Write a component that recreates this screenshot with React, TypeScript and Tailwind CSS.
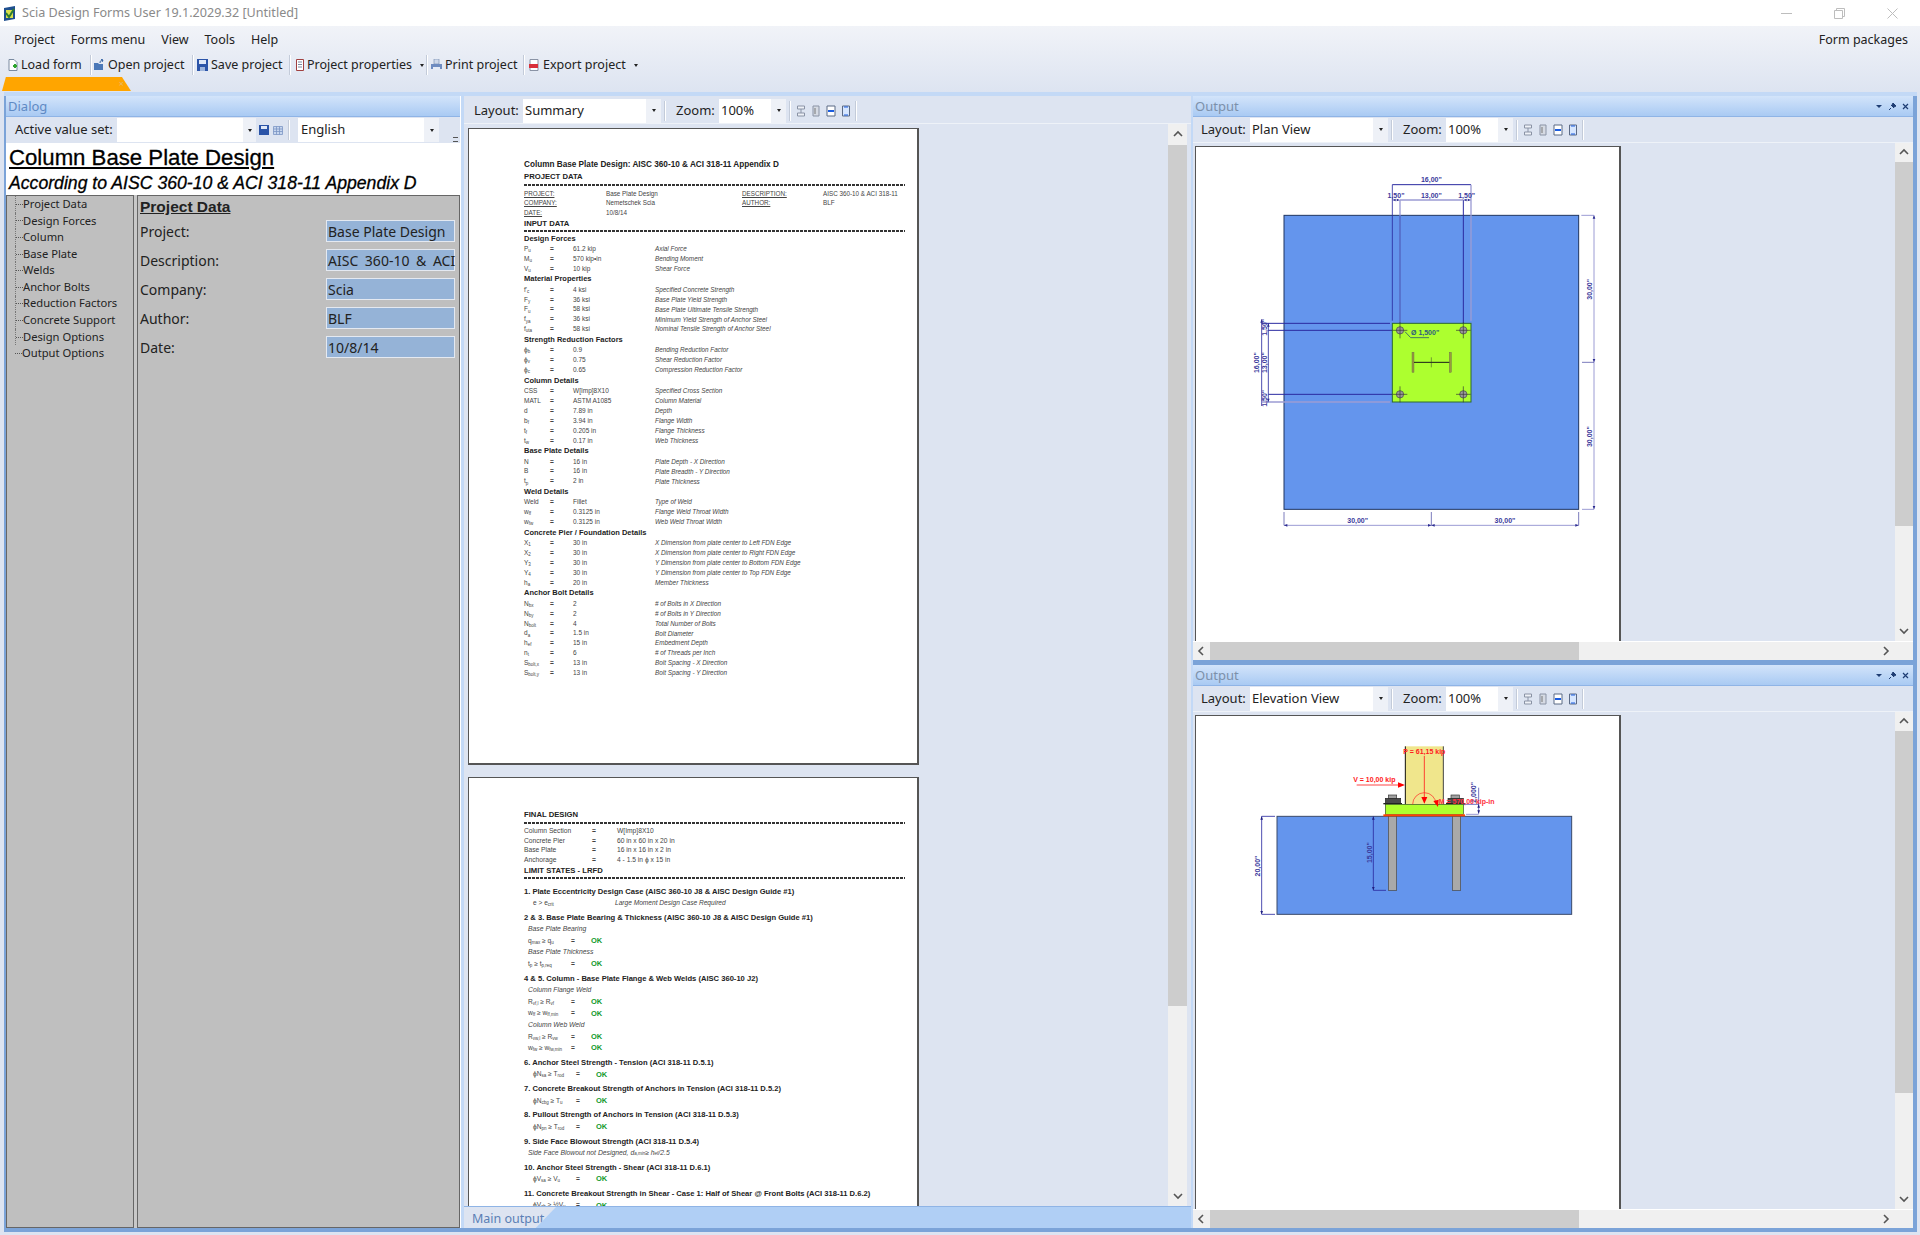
import React from "react";

const ui = "font-['Noto_Sans',sans-serif]";
const doc = "font-['Liberation_Sans',sans-serif]";

function Glyph({ kind }: { kind: string }) {
  if (kind === "load")
    return (
      <svg width="10" height="12" viewBox="0 0 10 12">
        <path d="M1 .5h5l3 3v8H1z" fill="#fff" stroke="#7a8aa0" />
        <path d="M5 7h4M7 5v4" stroke="#2fa52f" strokeWidth="2" />
      </svg>
    );
  if (kind === "open")
    return (
      <svg width="11" height="12" viewBox="0 0 11 12">
        <path d="M0 4h4l1 1h4v6H0z" fill="#4a78b8" />
        <path d="M6 4c0-2 1-3 3-3M7 .5l2 .5-1 2" fill="none" stroke="#2d5d9f" />
      </svg>
    );
  if (kind === "save")
    return (
      <svg width="11" height="12" viewBox="0 0 11 12">
        <path d="M0 0h11v12H0z" fill="#2b54a8" />
        <path d="M2 1h7v4H2z" fill="#dfe8f8" />
        <path d="M3 8h5v4H3z" fill="#9db4dc" />
      </svg>
    );
  if (kind === "props")
    return (
      <svg width="8" height="12" viewBox="0 0 8 12">
        <path d="M.5.5h7v11h-7z" fill="#fff" stroke="#a04040" />
        <path d="M2 3h4M2 5.5h4M2 8h4" stroke="#7a8aa0" />
      </svg>
    );
  if (kind === "print")
    return (
      <svg width="11" height="12" viewBox="0 0 11 12">
        <path d="M3 0h5v5H3z" fill="#cfd9ea" stroke="#6f86ad" strokeWidth=".6" />
        <path d="M0 5h11v5H0z" fill="#6f8cc0" />
        <path d="M2 8h7v3H2z" fill="#e6ecf6" />
      </svg>
    );
  return (
    <svg width="11" height="12" viewBox="0 0 11 12">
      <path d="M1 .5h8v11H1z" fill="#fff" stroke="#8a93a5" />
      <path d="M0 5h9v4H0z" fill="#d9303a" />
    </svg>
  );
}

function Caret() {
  return <span className="w-0 h-0 border-x-[2px] border-t-[3px] border-x-transparent border-t-[#222]" />;
}

function ToolItem({ icon, label, w, caret }: { icon: string; label: string; w: string; caret?: boolean }) {
  return (
    <div className={`flex items-center h-full shrink-0 ${w}`}>
      <Glyph kind={icon} />
      <span className="ml-[3px] text-[12.5px] text-[#222] whitespace-nowrap">{label}</span>
      {caret && (
        <span className="ml-[8px] flex">
          <Caret />
        </span>
      )}
    </div>
  );
}

function Sep() {
  return <span className="block w-px h-[20px] bg-[#c3cbd9] border-r border-white box-content shrink-0" />;
}

function ViewIcons() {
  return (
    <div className="flex items-center gap-[5px] ml-[5px]">
      <svg width="10" height="12" viewBox="0 0 10 12">
        <path d="M1.5 1h7v3h-7zM1.5 8h7v3h-7zM5 4v4" fill="#eef1f7" stroke="#8a93a5" />
      </svg>
      <svg width="10" height="12" viewBox="0 0 10 12">
        <path d="M2 1h6v10H2z" fill="#d5dae3" stroke="#8a93a5" />
        <path d="M4 3v6" stroke="#777" />
      </svg>
      <svg width="10" height="12" viewBox="0 0 10 12">
        <path d="M1 1h8v10H1z" fill="#fff" stroke="#5b6a85" />
        <path d="M2 6h6" stroke="#1a5ce0" strokeWidth="2" />
      </svg>
      <svg width="10" height="12" viewBox="0 0 10 12">
        <path d="M1.5 1h7v10h-7z" fill="#d6e6ff" stroke="#5b6a85" />
        <path d="M3 2h4M3 10h4" stroke="#1a5ce0" />
      </svg>
    </div>
  );
}

function Combo({ value, w }: { value: string; w: string }) {
  return (
    <div className="flex h-[24px] shrink-0">
      <div className={`bg-white flex items-center pl-[2px] text-[13px] text-[#222] ${w}`}>{value}</div>
      <div className="bg-[#eef1f7] flex items-center justify-center w-[15px]">
        <Caret />
      </div>
    </div>
  );
}

function OutputBar({ layout, box }: { layout: string; box: string }) {
  return (
    <div className={`bg-[#dde4f1] border-b border-[#eef2f8] flex items-center shrink-0 text-[13px] text-[#222] ${box}`}>
      <span className="w-[43px] whitespace-nowrap">Layout:</span>
      <span className="ml-[6px]">
        <Combo value={layout} w="w-[123px]" />
      </span>
      <span className="ml-[3px]">
        <Sep />
      </span>
      <span className="ml-[10px] w-[38px] whitespace-nowrap">Zoom:</span>
      <span className="ml-[5px]">
        <Combo value="100%" w="w-[52px]" />
      </span>
      <span className="ml-[3px]">
        <Sep />
      </span>
      <ViewIcons />
      <span className="ml-[4px]">
        <Sep />
      </span>
    </div>
  );
}

function Chevron({ dir }: { dir: "up" | "down" | "left" | "right" }) {
  const d = {
    up: "M1 6l4-4 4 4",
    down: "M1 2l4 4 4-4",
    left: "M6 1L2 5l4 4",
    right: "M2 1l4 4-4 4",
  }[dir];
  return (
    <svg width="10" height="10" viewBox="0 0 10 10">
      <path d={d} fill="none" stroke="#555" strokeWidth="1.6" />
    </svg>
  );
}

function VScroll({ thumb, w, btn }: { thumb: string; w: string; btn: string }) {
  return (
    <div className={`shrink-0 bg-[#f0f0f0] flex flex-col items-stretch ${w}`}>
      <div className={`flex items-center justify-center ${btn}`}>
        <Chevron dir="up" />
      </div>
      <div className={`bg-[#cdcdcd] ${thumb}`} />
      <div className="flex-1" />
      <div className="h-[19px] flex items-center justify-center">
        <Chevron dir="down" />
      </div>
    </div>
  );
}

function HScroll() {
  return (
    <div className="h-[19px] shrink-0 bg-[#f0f0f0] flex items-center border-t border-white">
      <div className="w-[17px] flex justify-center">
        <Chevron dir="left" />
      </div>
      <div className="w-[369px] h-full bg-[#cdcdcd]" />
      <div className="flex-1" />
      <div className="w-[17px] flex justify-center">
        <Chevron dir="right" />
      </div>
      <div className="w-[18px]" />
    </div>
  );
}

function PanelHead({ title, tone, buttons }: { title: string; tone: string; buttons?: boolean }) {
  return (
    <div className={`h-[21px] shrink-0 bg-gradient-to-b from-[#d3e4fa] to-[#a9caf3] border-b border-[#8fb4e6] flex items-center pl-[2px] pr-[4px] pt-[1px] text-[13px] ${tone}`}>
      <span>{title}</span>
      {buttons && (
        <div className="ml-auto flex items-center gap-[6px]">
          <span className="w-0 h-0 border-x-[3px] border-t-[3px] border-x-transparent border-t-[#1f3d73]" />
          <svg width="8" height="8" viewBox="0 0 8 8">
            <path d="M1 7l2-2M3 2l3 3M5 0l3 3-2 1-2-2z" fill="#1f3d73" stroke="#1f3d73" />
          </svg>
          <svg width="7" height="7" viewBox="0 0 7 7">
            <path d="M1 1l5 5M6 1L1 6" stroke="#1f3d73" strokeWidth="1.2" />
          </svg>
        </div>
      )}
    </div>
  );
}

const dimDark = "#2a2aa0";
const dimPale = "#9c9cd4";

function Dim({ x, y, t, rot }: { x: number; y: number; t: string; rot?: boolean }) {
  return (
    <text
      x={x}
      y={y}
      textAnchor="middle"
      dominantBaseline="middle"
      fontFamily="Liberation Sans, sans-serif"
      fontSize="21"
      fontWeight="700"
      fill="#3a3a9c"
      transform={rot ? `rotate(-90 ${x} ${y})` : undefined}
    >
      {t}
    </text>
  );
}

function Bolt({ x, y }: { x: number; y: number }) {
  return (
    <g>
      <circle cx={x} cy={y} r="11" fill="#9a9a9a" stroke="#444" strokeWidth="2" />
      <path d={`M${x - 22} ${y}h44M${x} ${y - 24}v48`} stroke="#333" strokeWidth="2" />
    </g>
  );
}

function PlanView() {
  return (
    <svg width="380" height="370" viewBox="0 0 1140 1110" className="block">
      <rect x="132" y="136" width="884" height="882" fill="#6495ed" stroke="#1f3560" strokeWidth="3" />
      <path d="M457 44V452M65 448V708M85 460V696" stroke={dimDark} strokeWidth="2.5" fill="none" />
      <path d="M457 44H693M670 90V460M65 460H450M85 481H480M85 673H480" stroke={dimDark} strokeWidth="3" fill="none" />
      <path d="M693 44V452M480 90V460M480 90H670M65 696H450" stroke={dimPale} strokeWidth="4" fill="none" />
      <path d="M480 136V460" stroke="#3f5fc8" strokeWidth="4" fill="none" />
      <path d="M1062 136V1018M132 1066H1016M1024 136H1062M1026 1018H1062" stroke={dimPale} strokeWidth="3" fill="none" />
      <path d="M1026 577H1062M132 1026V1066M574 1026V1066M1016 1026V1066" stroke="#3a3a9c" strokeWidth="2" fill="none" />
      <path d="M1062 136l-4 10h8zM1062 577l-4-10h8zM1062 1018l-4-10h8zM132 1066l10-4v8zM574 1066l-10-4v8zM574 1066l10-4v8zM1016 1066l-10-4v8zM457 90l10-4v8zM480 90l-10-4v8zM670 90l10-4v8zM693 90l-10-4v8zM65 448l-4 10h8zM85 460l-4 10h8zM85 696l-4-10h8z" fill="#2a2a90" />
      <rect x="457" y="460" width="236" height="236" fill="#adff2f" stroke="#2e6b2e" strokeWidth="3" />
      <Bolt x={480} y={481} />
      <Bolt x={670} y={481} />
      <Bolt x={480} y={673} />
      <Bolt x={670} y={673} />
      <path d="M495 485L512 503H567" stroke="#2e5c6e" strokeWidth="2.5" fill="none" />
      <rect x="516" y="547" width="6" height="60" fill="#9a9a3c" stroke="#555" />
      <rect x="628" y="547" width="6" height="60" fill="#9a9a3c" stroke="#555" />
      <path d="M522 577H628" stroke="#1a1a1a" strokeWidth="3" />
      <path d="M574 562V592" stroke="#333" strokeWidth="1.5" />
      <text x="513" y="490" dominantBaseline="middle" fontFamily="Liberation Sans, sans-serif" fontSize="21" fontWeight="700" fill="#2e5c7e">
        Ø 1,500"
      </text>
      <Dim x={574} y={31} t='16,00"' />
      <Dim x={468} y={77} t='1,50"' />
      <Dim x={574} y={77} t='13,00"' />
      <Dim x={680} y={77} t='1,50"' />
      <Dim x={52} y={578} t='16,00"' rot />
      <Dim x={75} y={578} t='13,00"' rot />
      <Dim x={75} y={472} t='1,50"' rot />
      <Dim x={75} y={685} t='1,50"' rot />
      <Dim x={1050} y={358} t='30,00"' rot />
      <Dim x={1050} y={800} t='30,00"' rot />
      <Dim x={353} y={1053} t='30,00"' />
      <Dim x={795} y={1053} t='30,00"' />
    </svg>
  );
}

function Nut({ x }: { x: number }) {
  return (
    <g>
      <rect x={x + 15} y="222" width="25" height="12" fill="#a0a0a0" stroke="#333" strokeWidth="2" />
      <rect x={x + 6} y="232" width="46" height="16" fill="#4a4a4a" stroke="#222" strokeWidth="2" />
      <rect x={x} y="246" width="56" height="4" fill="#222" />
    </g>
  );
}

function ElevationView() {
  return (
    <svg width="380" height="220" viewBox="0 0 1140 660" className="block">
      <rect x="111" y="286" width="884" height="294" fill="#6495ed" stroke="#3a4a6a" strokeWidth="3" />
      <rect x="495" y="76" width="115" height="174" fill="#f0e68c" />
      <path d="M496 76V250" stroke="#111" strokeWidth="3" />
      <path d="M610 76V250" stroke="#444" strokeWidth="3" />
      <Nut x={430} />
      <Nut x={618} />
      <rect x="445" y="286" width="25" height="222" fill="#a9a9a9" stroke="#444" strokeWidth="2" />
      <rect x="637" y="286" width="25" height="222" fill="#a9a9a9" stroke="#444" strokeWidth="2" />
      <rect x="436" y="250" width="234" height="30" fill="#adff2f" stroke="#2c4a1a" strokeWidth="2" />
      <rect x="430" y="280" width="245" height="6" fill="#ff4500" />
      <path d="M65 286V580M65 286H105M65 580H105M400 286V508M400 508H438" stroke={dimDark} strokeWidth="2.5" fill="none" />
      <path d="M716 200V278M670 250H716" stroke={dimDark} strokeWidth="2" fill="none" />
      <path d="M678 280H716" stroke={dimPale} strokeWidth="3" fill="none" />
      <path d="M65 286l-4 10h8zM65 580l-4-10h8zM400 286l-4 10h8zM400 508l-4-10h8zM716 250l-4 10h8zM716 278l-4-10h8z" fill="#1f1f80" />
      <path d="M553 105V240M350 192H478" stroke="#ff2020" strokeWidth="2.5" fill="none" />
      <path d="M518 250A35 35 0 0 1 588 250" stroke="#ff2020" strokeWidth="2" fill="none" />
      <path d="M544 228H562L553 248zM474 184V200L495 192zM580 240L596 236 594 258z" fill="#ff0000" />
      <Dim x={53} y={435} t='20,00"' rot />
      <Dim x={389} y={395} t='15,00"' rot />
      <Dim x={703} y={214} t='2,000"' rot />
      <text x="553" y="92" textAnchor="middle" dominantBaseline="middle" fontFamily="Liberation Sans, sans-serif" fontSize="21" fontWeight="700" fill="#ff2020">
        P = 61,15 kip
      </text>
      <text x="403" y="176" textAnchor="middle" dominantBaseline="middle" fontFamily="Liberation Sans, sans-serif" fontSize="21" fontWeight="700" fill="#ff2020">
        V = 10,00 kip
      </text>
      <text x="680" y="242" textAnchor="middle" dominantBaseline="middle" fontFamily="Liberation Sans, sans-serif" fontSize="21" fontWeight="700" fill="#ff3040">
        M = 570,00 kip-in
      </text>
    </svg>
  );
}

function Rule() {
  return <div className="h-[2px] w-[381px] bg-[repeating-linear-gradient(90deg,#333_0_3px,transparent_3px_4px)]" />;
}

function Head({ children }: { children: React.ReactNode }) {
  return <div className="h-[12px] flex items-center text-[7.7px] font-bold text-[#222] whitespace-nowrap">{children}</div>;
}

type Row = [string, string, string, string];
const sections: { title: string; rows: Row[] }[] = [
  {
    title: "Design Forces",
    rows: [
      ["P", "u", "61.2 kip", "Axial Force"],
      ["M", "u", "570 kip•in", "Bending Moment"],
      ["V", "u", "10 kip", "Shear Force"],
    ],
  },
  {
    title: "Material Properties",
    rows: [
      ["f'", "c", "4 ksi", "Specified Concrete Strength"],
      ["F", "y", "36 ksi", "Base Plate Yield Strength"],
      ["F", "u", "58 ksi", "Base Plate Ultimate Tensile Strength"],
      ["f", "ya", "36 ksi", "Minimum Yield Strength of Anchor Steel"],
      ["f", "uta", "58 ksi", "Nominal Tensile Strength of Anchor Steel"],
    ],
  },
  {
    title: "Strength Reduction Factors",
    rows: [
      ["ϕ", "b", "0.9", "Bending Reduction Factor"],
      ["ϕ", "v", "0.75", "Shear Reduction Factor"],
      ["ϕ", "c", "0.65", "Compression Reduction Factor"],
    ],
  },
  {
    title: "Column Details",
    rows: [
      ["CSS", "", "W[Imp]8X10", "Specified Cross Section"],
      ["MATL", "", "ASTM A1085", "Column Material"],
      ["d", "", "7.89 in", "Depth"],
      ["b", "f", "3.94 in", "Flange Width"],
      ["t", "f", "0.205 in", "Flange Thickness"],
      ["t", "w", "0.17 in", "Web Thickness"],
    ],
  },
  {
    title: "Base Plate Details",
    rows: [
      ["N", "", "16 in", "Plate Depth - X Direction"],
      ["B", "", "16 in", "Plate Breadth - Y Direction"],
      ["t", "p", "2 in", "Plate Thickness"],
    ],
  },
  {
    title: "Weld Details",
    rows: [
      ["Weld", "", "Fillet", "Type of Weld"],
      ["w", "ff", "0.3125 in", "Flange Weld Throat Width"],
      ["w", "fw", "0.3125 in", "Web Weld Throat Width"],
    ],
  },
  {
    title: "Concrete Pier / Foundation Details",
    rows: [
      ["X", "1", "30 in", "X Dimension from plate center to Left FDN Edge"],
      ["X", "2", "30 in", "X Dimension from plate center to Right FDN Edge"],
      ["Y", "3", "30 in", "Y Dimension from plate center to Bottom FDN Edge"],
      ["Y", "4", "30 in", "Y Dimension from plate center to Top FDN Edge"],
      ["h", "a", "20 in", "Member Thickness"],
    ],
  },
  {
    title: "Anchor Bolt Details",
    rows: [
      ["N", "bx", "2", "# of Bolts in X Direction"],
      ["N", "by", "2", "# of Bolts in Y Direction"],
      ["N", "bolt", "4", "Total Number of Bolts"],
      ["d", "a", "1.5 in", "Bolt Diameter"],
      ["h", "ef", "15 in", "Embedment Depth"],
      ["n", "t", "6", "# of Threads per Inch"],
      ["S", "bolt,x", "13 in", "Bolt Spacing - X Direction"],
      ["S", "bolt,y", "13 in", "Bolt Spacing -  Y Direction"],
    ],
  },
];

function SummaryPage() {
  return (
    <div className={`w-[451px] h-[637px] bg-white border border-[#555] border-r-2 border-b-2 pt-[30px] pl-[55px] shrink-0 ${doc}`}>
      <div className="h-[12px] flex items-center text-[8.2px] font-bold text-[#222] whitespace-nowrap">
        Column Base Plate Design: AISC 360-10 &amp; ACI 318-11 Appendix D
      </div>
      <Head>PROJECT DATA</Head>
      <div className="mt-[0.5px]">
        <Rule />
      </div>
      <div className="mt-[3px] grid grid-cols-[82px_136px_81px_1fr] auto-rows-[9.6px] items-center text-[6.3px] text-[#444] w-[381px]">
        <span className="underline">PROJECT:</span>
        <span>Base Plate Design</span>
        <span className="underline">DESCRIPTION:</span>
        <span>AISC 360-10 &amp; ACI 318-11</span>
        <span className="underline">COMPANY:</span>
        <span>Nemetschek Scia</span>
        <span className="underline">AUTHOR:</span>
        <span>BLF</span>
        <span className="underline">DATE:</span>
        <span>10/8/14</span>
      </div>
      <Head>INPUT DATA</Head>
      <div className="mt-[0.5px]">
        <Rule />
      </div>
      <div className="mt-[1px]">
        {sections.map((s) => (
          <div key={s.title}>
            <div className="h-[11px] flex items-center text-[7.5px] font-bold text-[#222] whitespace-nowrap">{s.title}</div>
            {s.rows.map((r) => (
              <div key={r[3]} className="h-[9.93px] grid grid-cols-[26px_23px_82px_1fr] items-center text-[6.5px] text-[#444] whitespace-nowrap">
                <span>
                  {r[0]}
                  {r[1] && <sub className="text-[4.5px]">{r[1]}</sub>}
                </span>
                <span className="font-bold">=</span>
                <span>{r[2]}</span>
                <span className="italic text-[6.35px]">{r[3]}</span>
              </div>
            ))}
          </div>
        ))}
      </div>
    </div>
  );
}

function CheckHead({ children }: { children: React.ReactNode }) {
  return <div className="h-[14.6px] pt-[3px] flex items-center text-[7.6px] font-bold text-[#222] whitespace-nowrap">{children}</div>;
}

function Note({ children }: { children: React.ReactNode }) {
  return <div className="h-[11.6px] flex items-center italic text-[6.8px] text-[#444] whitespace-nowrap pl-[4px]">{children}</div>;
}

function Ok({ left, wide }: { left: React.ReactNode; wide?: boolean }) {
  return (
    <div className={`h-[11.6px] grid grid-cols-[43px_20px_1fr] items-center text-[6.6px] text-[#444] whitespace-nowrap ${wide ? "pl-[9px]" : "pl-[4px]"}`}>
      <span>{left}</span>
      <span className="font-bold">=</span>
      <span className="text-[7.5px] font-bold text-[#119a2c]">OK</span>
    </div>
  );
}

function S({ b, s }: { b: string; s: string }) {
  return (
    <>
      {b}
      <sub className="text-[4.5px]">{s}</sub>
    </>
  );
}

function ChecksPage() {
  return (
    <div className={`w-[451px] h-[660px] bg-white border border-[#555] border-r-2 pt-[31px] pl-[55px] shrink-0 ${doc}`}>
      <Head>FINAL DESIGN</Head>
      <div className="mt-[0.5px]">
        <Rule />
      </div>
      <div className="mt-[2.7px] grid grid-cols-[68px_25px_1fr] auto-rows-[9.6px] items-center text-[6.7px] text-[#444] whitespace-nowrap">
        <span>Column Section</span>
        <span className="font-bold">=</span>
        <span>W[Imp]8X10</span>
        <span>Concrete Pier</span>
        <span className="font-bold">=</span>
        <span>60 in x 60 in x 20 in</span>
        <span>Base Plate</span>
        <span className="font-bold">=</span>
        <span>16 in x 16 in x 2 in</span>
        <span>Anchorage</span>
        <span className="font-bold">=</span>
        <span>4 - 1.5 in ϕ x 15 in</span>
      </div>
      <Head>LIMIT STATES - LRFD</Head>
      <div className="mt-[0.5px]">
        <Rule />
      </div>
      <div className="mt-[3.5px]">
        <CheckHead>1. Plate Eccentricity Design Case (AISC 360-10 J8 &amp; AISC Design Guide #1)</CheckHead>
        <div className="h-[11.6px] pl-[9px] grid grid-cols-[82px_1fr] items-center text-[6.6px] text-[#444] whitespace-nowrap">
          <span>
            e &gt; <S b="e" s="crit" />
          </span>
          <span className="italic">Large Moment Design Case Required</span>
        </div>
        <CheckHead>2 &amp; 3. Base Plate Bearing &amp; Thickness (AISC 360-10 J8 &amp; AISC Design Guide #1)</CheckHead>
        <Note>Base Plate Bearing</Note>
        <Ok left={<><S b="q" s="max" /> ≥ <S b="q" s="u" /></>} />
        <Note>Base Plate Thickness</Note>
        <Ok left={<><S b="t" s="p" /> ≥ <S b="t" s="p,req" /></>} />
        <CheckHead>4 &amp; 5. Column - Base Plate Flange &amp; Web Welds (AISC 360-10 J2)</CheckHead>
        <Note>Column Flange Weld</Note>
        <Ok left={<><S b="R" s="vf,l" /> ≥ <S b="R" s="vf" /></>} />
        <Ok left={<><S b="w" s="ff" /> ≥ <S b="w" s="ff,min" /></>} />
        <Note>Column Web Weld</Note>
        <Ok left={<><S b="R" s="vw,l" /> ≥ <S b="R" s="vw" /></>} />
        <Ok left={<><S b="w" s="fw" /> ≥ <S b="w" s="fw,min" /></>} />
        <CheckHead>6. Anchor Steel Strength - Tension (ACI 318-11 D.5.1)</CheckHead>
        <Ok wide left={<>ϕ<S b="N" s="sa" /> ≥ <S b="T" s="rod" /></>} />
        <CheckHead>7. Concrete Breakout Strength of Anchors in Tension (ACI 318-11 D.5.2)</CheckHead>
        <Ok wide left={<>ϕ<S b="N" s="cbg" /> ≥ <S b="T" s="u" /></>} />
        <CheckHead>8. Pullout Strength of Anchors in Tension (ACI 318-11 D.5.3)</CheckHead>
        <Ok wide left={<>ϕ<S b="N" s="pn" /> ≥ <S b="T" s="rod" /></>} />
        <CheckHead>9. Side Face Blowout Strength (ACI 318-11 D.5.4)</CheckHead>
        <Note>Side Face Blowout not Designed, d<sub className="text-[4.5px]">a,min</sub> ≥ h<sub className="text-[4.5px]">ef</sub>/2.5</Note>
        <CheckHead>10. Anchor Steel Strength - Shear (ACI 318-11 D.6.1)</CheckHead>
        <Ok wide left={<>ϕ<S b="V" s="sa" /> ≥ <S b="V" s="u" /></>} />
        <CheckHead>11. Concrete Breakout Strength in Shear - Case 1: Half of Shear @ Front Bolts (ACI 318-11 D.6.2)</CheckHead>
        <Ok wide left={<>ϕ<S b="V" s="cb" /> ≥ ½<S b="V" s="u" /></>} />
      </div>
    </div>
  );
}

const treeItems = [
  "Project Data",
  "Design Forces",
  "Column",
  "Base Plate",
  "Welds",
  "Anchor Bolts",
  "Reduction Factors",
  "Concrete Support",
  "Design Options",
  "Output Options",
];

const fields = [
  ["Project:", "Base Plate Design", ""],
  ["Description:", "AISC 360-10 & ACI", "[word-spacing:3px]"],
  ["Company:", "Scia", ""],
  ["Author:", "BLF", ""],
  ["Date:", "10/8/14", ""],
];

function DialogPanel() {
  return (
    <div className="w-[454px] shrink-0 flex flex-col bg-white">
      <PanelHead title="Dialog" tone="text-[#5f8ac4]" />
      <div className="h-[26px] bg-[#dde4f1] flex items-center pl-[9px] text-[13px] text-[#222] shrink-0 relative">
        <span className="w-[102px] whitespace-nowrap">Active value set:</span>
        <div className="bg-white w-[126px] h-[24px]" />
        <div className="w-[13px] h-[24px] bg-[#eef1f7] flex items-center justify-center">
          <Caret />
        </div>
        <svg width="10" height="10" viewBox="0 0 10 10" className="ml-[3px]">
          <path d="M0 0h10v10H0z" fill="#2b54a8" />
          <path d="M2 1h6v3H2z" fill="#dfe8f8" />
        </svg>
        <svg width="10" height="9" viewBox="0 0 10 9" className="ml-[4px]">
          <path d="M.5.5h9v8h-9zM.5 3h9M.5 5.5h9M3.5.5v8M6.5.5v8" fill="#c7d6ee" stroke="#7b96c4" strokeWidth=".8" />
        </svg>
        <span className="ml-[5px]">
          <Sep />
        </span>
        <div className="ml-[8px] bg-white w-[126px] h-[24px] flex items-center pl-[3px]">English</div>
        <div className="w-[15px] h-[24px] bg-[#eef1f7] flex items-center justify-center">
          <Caret />
        </div>
        <span className="absolute right-[2px] bottom-[1px] w-[5px] h-[5px] border-t border-b border-[#555]" />
      </div>
      <div className="h-[52px] shrink-0 bg-white pl-[3px] font-['Liberation_Sans',sans-serif] text-black">
        <div className="h-[29px] pt-[1px] text-[22.2px] leading-[28px] underline whitespace-nowrap [-webkit-text-stroke:0.3px_black]">Column Base Plate Design</div>
        <div className="h-[23px] text-[17.65px] leading-[23px] italic whitespace-nowrap [-webkit-text-stroke:0.3px_black]">According to AISC 360-10 &amp; ACI 318-11 Appendix D</div>
      </div>
      <div className={`flex-1 flex bg-[#c8c8c8] gap-[3px] ${ui}`}>
        <div className="w-[128px] bg-[#bfbfbf] border border-[#666] pl-[8px]">
          {treeItems.map((t, i) => (
            <div key={t} className={`h-[16.6px] flex items-center ${i < treeItems.length - 1 ? "border-l border-dotted border-[#777]" : ""}`}>
              <span className="w-[7px] border-t border-dotted border-[#555]" />
              <span className="text-[11.2px] text-[#222] whitespace-nowrap">{t}</span>
            </div>
          ))}
        </div>
        <div className="flex-1 bg-[#bfbfbf] border border-[#666] pl-[2px] pr-[4px]">
          <div className="h-[21px] flex items-center font-['Liberation_Sans',sans-serif] text-[15.5px] font-bold underline text-[#222]">Project Data</div>
          <div className="mt-[3px] flex flex-col gap-[7px]">
            {fields.map(([k, v, extra]) => (
              <div key={k} className="flex h-[22px] items-center justify-between text-[14px] text-[#222]">
                <span>{k}</span>
                <div className={`w-[129px] h-[22px] bg-[#95b3d7] border border-[#e4e9f1] flex items-center pl-[1px] whitespace-nowrap ${extra}`}>{v}</div>
              </div>
            ))}
          </div>
        </div>
      </div>
    </div>
  );
}

function MainOutput() {
  return (
    <div className="w-[727px] shrink-0 flex flex-col bg-[#dde4f1]">
      <OutputBar layout="Summary" box="pl-[10px] h-[28px] pt-[2px]" />
      <div className="flex-1 min-h-0 flex">
        <div className="flex-1 min-w-0 overflow-hidden pl-[4px] pt-[4px] flex flex-col gap-[12px]">
          <SummaryPage />
          <ChecksPage />
        </div>
        <VScroll thumb="h-[861px]" w="w-[19px]" btn="h-[21px]" />
        <div className="w-[4px]" />
      </div>
      <div className="h-[22px] shrink-0 bg-[#b0cff5] border-t border-[#8fb4e6] flex">
        <div className="w-[92px] bg-[#dde4f1] [clip-path:polygon(0_0,100%_0,78%_100%,0_100%)] pl-[8px] pt-[3px] flex items-center text-[12.5px] text-[#5a7fb5] whitespace-nowrap">
          Main output
        </div>
      </div>
    </div>
  );
}

function OutputPanel({ layout, thumb, gap, box, children }: { layout: string; thumb: string; gap: string; box: string; children: React.ReactNode }) {
  return (
    <div className={`min-h-0 flex flex-col bg-[#dde4f1] ${box}`}>
      <PanelHead title="Output" tone="text-[#7c90aa]" buttons />
      <OutputBar layout={layout} box="pl-[8px] h-[26px]" />
      <div className="flex-1 min-h-0 flex">
        <div className="flex-1 min-w-0 overflow-hidden pl-[2px] pt-[3px]">
          <div className={`w-[426px] h-[640px] bg-white border border-[#555] border-r-2 pl-[44px] ${gap}`}>{children}</div>
        </div>
        <VScroll thumb={thumb} w="w-[18px]" btn="h-[19px]" />
      </div>
      <HScroll />
    </div>
  );
}

export default function App() {
  return (
    <div className={`w-[1920px] h-[1235px] overflow-hidden flex flex-col bg-[#dde4f1] text-[#222] ${ui}`}>
      <div className="h-[26px] shrink-0 bg-white flex items-center">
        <svg width="15" height="15" viewBox="0 0 15 15" className="ml-[3px]">
          <path d="M1 2l11-2v13L1 15z" fill="#1f4f8f" />
          <path d="M3 4h7v8H3z" fill="#d9e04a" />
          <path d="M3 7l3 4 5-8" stroke="#2f7d2f" strokeWidth="2" fill="none" />
        </svg>
        <span className="ml-[4px] text-[12.6px] text-[#8a8a8a] whitespace-nowrap">Scia Design Forms User 19.1.2029.32 [Untitled]</span>
        <div className="ml-auto flex items-center gap-[42px] pr-[22px]">
          <svg width="11" height="11" viewBox="0 0 11 11">
            <path d="M0 5.5h11" stroke="#bdbdbd" />
          </svg>
          <svg width="11" height="11" viewBox="0 0 11 11">
            <path d="M.5 2.5h8v8h-8zM2.5 2.5v-2h8v8h-2" fill="none" stroke="#bdbdbd" />
          </svg>
          <svg width="11" height="11" viewBox="0 0 11 11">
            <path d="M.5.5l10 10M10.5.5l-10 10" stroke="#bdbdbd" />
          </svg>
        </div>
      </div>

      <div className="h-[66px] shrink-0 bg-gradient-to-b from-[#f1f3f8] to-[#dde4f1] flex flex-col">
        <div className="h-[27px] pt-[1px] flex items-center pl-[14px] gap-[16px] text-[12.5px] text-[#222]">
          <span>Project</span>
          <span>Forms menu</span>
          <span>View</span>
          <span>Tools</span>
          <span>Help</span>
          <span className="ml-auto pr-[12px]">Form packages</span>
        </div>
        <div className="h-[24px] flex items-center pl-[8px]">
          <ToolItem icon="load" label="Load form" w="w-[82px]" />
          <Sep />
          <span className="w-[2px]" />
          <ToolItem icon="open" label="Open project" w="w-[98px]" />
          <Sep />
          <span className="w-[3px]" />
          <ToolItem icon="save" label="Save project" w="w-[92px]" />
          <Sep />
          <span className="w-[5px]" />
          <ToolItem icon="props" label="Project properties" w="w-[130px]" caret />
          <Sep />
          <span className="w-[3px]" />
          <ToolItem icon="print" label="Print project" w="w-[92px]" />
          <Sep />
          <span className="w-[4px]" />
          <ToolItem icon="export" label="Export project" w="w-[110px]" caret />
        </div>
        <div className="h-[14px] pl-[2px]">
          <div className="w-[129px] h-[14px] bg-[#ffa500] [clip-path:polygon(3%_0,93%_0,100%_100%,0_100%)] flex items-center justify-end pr-[7px] text-[9px] text-[#e8b868]">
            ×
          </div>
        </div>
      </div>

      <div className="h-[1140px] shrink-0 ml-[4px] mr-[3px] bg-[#7ba3d8] border-t-[4px] border-[#c3d9f6] pb-[4px] pl-[2px] pr-[4px] flex">
        <DialogPanel />
        <div className="w-[1px] bg-white shrink-0" />
        <div className="w-[3px] bg-[#c3d9f6] shrink-0" />
        <MainOutput />
        <div className="w-[2px] bg-[#c3d9f6] shrink-0" />
        <div className="flex-1 min-w-0 flex flex-col">
          <OutputPanel layout="Plan View" thumb="h-[364px]" gap="pt-[23px]" box="h-[564px] shrink-0">
            <PlanView />
          </OutputPanel>
          <div className="h-[5px] shrink-0 bg-[#7ba3d8]" />
          <OutputPanel layout="Elevation View" thumb="h-[362px]" gap="pt-[5px]" box="flex-1">
            <ElevationView />
          </OutputPanel>
        </div>
      </div>
    </div>
  );
}
